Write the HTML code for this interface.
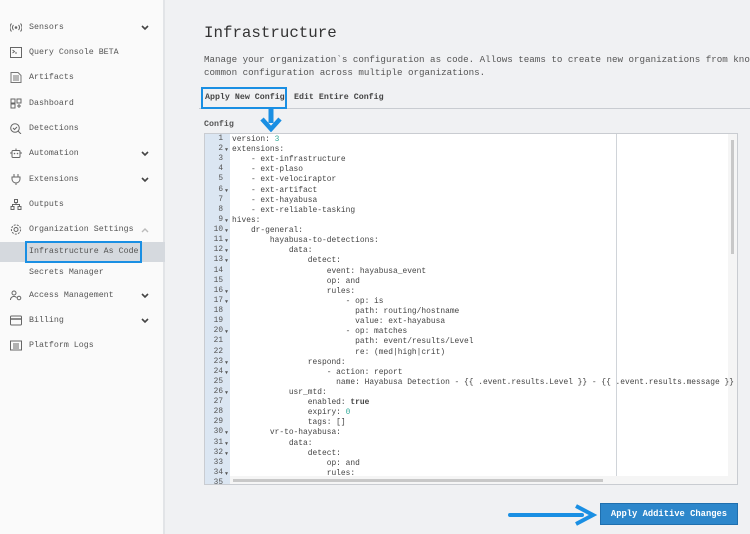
<!DOCTYPE html><html><head><style>
*{margin:0;padding:0;box-sizing:border-box}
body{width:750px;height:534px;overflow:hidden;background:#f0f1f3;font-family:"Liberation Mono",monospace;position:relative}
#sb{position:absolute;left:0;top:0;width:165px;height:534px;background:#fafafa;border-right:2px solid #e2e4e7}
.it{position:absolute;left:10px;font-size:8.3px;color:#555;height:12px;line-height:12px;width:150px}
.it .ic{position:absolute;left:0;top:0;width:12px;height:11px;color:#666}
.it span.t{position:absolute;left:19px}
.it .ch{position:absolute;right:11px;top:3px}
#main{position:absolute;left:167px;top:0;right:0;bottom:0}
h1{position:absolute;left:37px;top:24px;font-family:"Liberation Mono",monospace;font-weight:normal;font-size:15.8px;color:#333}
.desc{position:absolute;left:37px;top:53px;font-size:9.2px;color:#555;line-height:13px;white-space:nowrap}
#ed{position:absolute;left:204px;top:133px;width:534px;height:352px;background:#fff;border:1px solid #c9ccd1;overflow:hidden}
#gut{position:absolute;left:0;top:0;width:25px;height:100%;background:#dbe6f2}
.ln{position:absolute;left:0;width:18px;text-align:right;font-size:7.8px;color:#555}
.fd{position:absolute;left:20px;font-size:5px;color:#555}
.cd{position:absolute;left:27px;font-size:7.9px;color:#444;white-space:pre}
</style></head><body>
<div id="sb">
<div class="it" style="top:22px"><svg class="ic" viewBox="0 0 12 11"><circle cx="6" cy="5.5" r="1.3" fill="#666"/><path d="M3.5 3a3.5 3.5 0 0 0 0 5M8.5 3a3.5 3.5 0 0 1 0 5M1.5 1.5a6 6 0 0 0 0 8M10.5 1.5a6 6 0 0 1 0 8" stroke="#666" fill="none"/></svg><span class="t">Sensors</span><svg class="ch" width="8" height="6"><path d="M1 1l3 3 3-3" stroke="#444" stroke-width="1.6" fill="none"/></svg></div>
<div class="it" style="top:47px"><svg class="ic" viewBox="0 0 12 11"><rect x=".5" y=".5" width="11" height="10" fill="none" stroke="#666"/><path d="M2.5 3l2 1.5-2 1.5M5 6h2" stroke="#666" fill="none"/></svg><span class="t">Query Console BETA</span></div>
<div class="it" style="top:72px"><svg class="ic" viewBox="0 0 12 11"><path d="M1 .5h7l3 3v7H1z M3 4h6M3 6h6M3 8h6" stroke="#777" fill="none"/></svg><span class="t">Artifacts</span></div>
<div class="it" style="top:98px"><svg class="ic" viewBox="0 0 12 11"><path d="M1 1h4v4H1zM7 1h4v4H7zM1 6h4v4H1zM9 6v4M7 8h4" stroke="#666" fill="none"/></svg><span class="t">Dashboard</span></div>
<div class="it" style="top:123px"><svg class="ic" viewBox="0 0 12 11"><circle cx="5" cy="5" r="4.3" fill="none" stroke="#666"/><path d="M3 5l1.5 1.5L7 4M8 8l3 3" stroke="#666" fill="none"/></svg><span class="t">Detections</span></div>
<div class="it" style="top:148px"><svg class="ic" viewBox="0 0 12 11"><rect x="2" y="2.5" width="8" height="7" rx="1" fill="none" stroke="#666"/><path d="M6 .5v2M0 5h2M10 5h2" stroke="#666"/><circle cx="4.5" cy="5.5" r=".8" fill="#666"/><circle cx="7.5" cy="5.5" r=".8" fill="#666"/></svg><span class="t">Automation</span><svg class="ch" width="8" height="6"><path d="M1 1l3 3 3-3" stroke="#444" stroke-width="1.6" fill="none"/></svg></div>
<div class="it" style="top:174px"><svg class="ic" viewBox="0 0 12 11"><path d="M4 0v3M8 0v3M2 3h8v2a4 4 0 0 1-8 0zM6 9v2" stroke="#666" fill="none"/></svg><span class="t">Extensions</span><svg class="ch" width="8" height="6"><path d="M1 1l3 3 3-3" stroke="#444" stroke-width="1.6" fill="none"/></svg></div>
<div class="it" style="top:199px"><svg class="ic" viewBox="0 0 12 11"><path d="M4.5 .5h3v3h-3zM1 7.5h3v3H1zM8 7.5h3v3H8zM6 3.5v2M2.5 7.5V5.5h7v2" stroke="#666" fill="none"/></svg><span class="t">Outputs</span></div>
<div class="it" style="top:224px"><svg class="ic" viewBox="0 0 12 11"><circle cx="6" cy="5.5" r="2" fill="none" stroke="#666"/><circle cx="6" cy="5.5" r="4.6" fill="none" stroke="#666" stroke-dasharray="2 1.2"/></svg><span class="t">Organization Settings</span><svg class="ch" width="8" height="6"><path d="M1 5l3-3 3 3" stroke="#bbb" stroke-width="1.4" fill="none"/></svg></div>
<div style="position:absolute;left:0;top:242px;width:165px;height:20px;background:#d5d9de"></div>
<div style="position:absolute;left:25px;top:241px;width:117px;height:22px;border:2px solid #1a8fe3"></div>
<div class="it" style="top:246px;left:29px">Infrastructure As Code</div>
<div class="it" style="top:267px;left:29px">Secrets Manager</div>
<div class="it" style="top:290px"><svg class="ic" viewBox="0 0 12 11"><circle cx="4" cy="3" r="2" fill="none" stroke="#666"/><path d="M0.5 10a3.5 3.5 0 0 1 6-2.5" stroke="#666" fill="none"/><circle cx="9" cy="8" r="1.8" fill="none" stroke="#666"/></svg><span class="t">Access Management</span><svg class="ch" width="8" height="6"><path d="M1 1l3 3 3-3" stroke="#444" stroke-width="1.6" fill="none"/></svg></div>
<div class="it" style="top:315px"><svg class="ic" viewBox="0 0 12 11"><rect x=".5" y="1" width="11" height="9" rx="1" fill="none" stroke="#666"/><path d="M.5 4h11" stroke="#666" stroke-width="1.5"/></svg><span class="t">Billing</span><svg class="ch" width="8" height="6"><path d="M1 1l3 3 3-3" stroke="#444" stroke-width="1.6" fill="none"/></svg></div>
<div class="it" style="top:340px"><svg class="ic" viewBox="0 0 12 11"><rect x=".5" y="1" width="11" height="9" fill="none" stroke="#666"/><path d="M3 4h6M3 6h6M3 8h6" stroke="#666"/></svg><span class="t">Platform Logs</span></div>
</div>
<div id="main">
<h1>Infrastructure</h1>
<div class="desc">Manage your organization`s configuration as code. Allows teams to create new organizations from known<br>common configuration across multiple organizations.</div>
</div>
<div style="position:absolute;left:199px;top:108px;width:551px;height:1px;background:#c9ccd1"></div>
<div style="position:absolute;left:201px;top:87px;width:86px;height:22px;border:2px solid #1a8fe3"></div>
<div style="position:absolute;left:205px;top:93px;font-size:8.3px;font-weight:bold;color:#444">Apply New Config</div>
<div style="position:absolute;left:294px;top:93px;font-size:8.3px;font-weight:bold;color:#444">Edit Entire Config</div>
<div style="position:absolute;left:204px;top:120px;font-size:8.3px;font-weight:bold;color:#555">Config</div>
<svg style="position:absolute;left:259px;top:107px" width="24" height="25"><path d="M12 0v16" stroke="#1a8fe3" stroke-width="5"/><path d="M3 12l9 10 9-10" stroke="#1a8fe3" stroke-width="4.5" fill="none"/></svg>
<div id="ed"><div id="gut"></div>
<div style="position:absolute;left:411px;top:0;width:1px;height:100%;background:#d0d4d9"></div>
<div style="position:absolute;right:0;top:0;width:9px;height:100%;background:#f5f5f5"></div>
<div style="position:absolute;right:3px;top:6px;width:3px;height:114px;background:#c8c8c8"></div>
<div style="position:absolute;left:25px;bottom:0;width:500px;height:8px;background:#f5f5f5"></div>
<div style="position:absolute;left:28px;bottom:2px;width:370px;height:3px;background:#c8c8c8"></div>
<div id="code"></div></div>
<script>
var L=[[0,"version: <span style='color:#3a9'>3</span>"],[0,"extensions:"],[4,"- ext-infrastructure"],[4,"- ext-plaso"],[4,"- ext-velociraptor"],[4,"- ext-artifact"],[4,"- ext-hayabusa"],[4,"- ext-reliable-tasking"],[0,"hives:"],[4,"dr-general:"],[8,"hayabusa-to-detections:"],[12,"data:"],[16,"detect:"],[20,"event: hayabusa_event"],[20,"op: and"],[20,"rules:"],[24,"- op: is"],[26,"path: routing/hostname"],[26,"value: ext-hayabusa"],[24,"- op: matches"],[26,"path: event/results/Level"],[26,"re: (med|high|crit)"],[16,"respond:"],[20,"- action: report"],[22,"name: Hayabusa Detection - {{ .event.results.Level }} - {{ .event.results.message }}"],[12,"usr_mtd:"],[16,"enabled: <b>true</b>"],[16,"expiry: <span style='color:#3a9'>0</span>"],[16,"tags: []"],[8,"vr-to-hayabusa:"],[12,"data:"],[16,"detect:"],[20,"op: and"],[20,"rules:"],[24,""]];
var F=[2,6,9,10,11,12,13,16,17,20,23,24,26,30,31,32,34];
var h="";L.forEach(function(l,i){var t=1+i*10.12;h+="<div class='ln' style='top:"+t+"px'>"+(i+1)+"</div>";if(F.indexOf(i+1)>=0)h+="<div class='fd' style='top:"+(t+2)+"px'>&#9660;</div>";h+="<div class='cd' style='top:"+t+"px'>"+" ".repeat(l[0])+l[1]+"</div>";});
document.getElementById("code").innerHTML=h;
</script>
<svg style="position:absolute;left:508px;top:503px" width="90" height="24"><path d="M2 12h72" stroke="#1a8fe3" stroke-width="4" stroke-linecap="round"/><path d="M68 3l17 9-17 9" stroke="#1a8fe3" stroke-width="4" fill="none"/></svg>
<div style="position:absolute;left:600px;top:503px;width:138px;height:22px;background:#2d87cb;border:1px solid #1f6fae;color:#fff;font-size:8.8px;font-weight:bold;text-align:center;line-height:20px">Apply Additive Changes</div>
</body></html>
